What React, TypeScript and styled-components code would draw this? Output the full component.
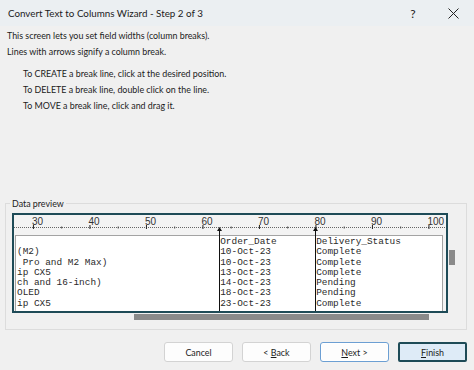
import React from "react";
import styled, { createGlobalStyle, css } from "styled-components";

const Global = createGlobalStyle`
  html, body { margin: 0; padding: 0; background: #f0f0f0; }
  body { font-family: "Segoe UI", Lato, "Noto Sans", sans-serif; }
`;

const CHAR = 5.65;
const FIRST_COL = 27;
const colX = (n: number) => 2 + (n - FIRST_COL) * CHAR;

const Window = styled.div`
  width: 474px;
  height: 370px;
  display: flex;
  flex-direction: column;
  background: #f0f0f0;
  color: #1b1b1b;
  overflow: hidden;
  box-sizing: border-box;
`;

const TitleBar = styled.div`
  height: 26px;
  flex: none;
  display: flex;
  align-items: center;
  background: #ebeff2;
  padding-left: 8px;
`;

const Title = styled.div`
  flex: 1;
  font-size: 9.8px;
`;

const Caption = styled.div<{ $w: number }>`
  width: ${(p) => p.$w}px;
  height: 26px;
  display: flex;
  align-items: center;
  justify-content: center;
  font-size: 12px;
  color: #222;
`;

const Content = styled.div`
  flex: 1;
  display: flex;
  flex-direction: column;
  padding: 2px 0 8px 7px;
`;

const Para = styled.div<{ $indent?: number; $top?: number }>`
  font-size: 8.9px;
  line-height: 16px;
  padding-left: ${(p) => p.$indent ?? 0}px;
  margin-top: ${(p) => p.$top ?? 0}px;
  white-space: nowrap;
`;

const Group = styled.div`
  position: relative;
  margin-top: auto;
  margin-left: -2px;
  width: 462px;
  height: 127px;
  box-sizing: border-box;
  border: 1px solid #dcdcdc;
  padding: 9px 0 0 6px;
`;

const Legend = styled.span`
  position: absolute;
  left: 4px;
  top: -6px;
  padding: 0 2px;
  background: #f0f0f0;
  font-size: 8.9px;
  line-height: 12px;
`;

const PreviewGrid = styled.div`
  display: grid;
  grid-template-columns: 436px 8px;
  grid-template-rows: 100px 8px;
`;

const Frame = styled.div`
  position: relative;
  box-sizing: border-box;
  border: 2px solid #1e4b57;
  background: #f3f3f3;
  display: flex;
  flex-direction: column;
  overflow: hidden;
`;

const Ruler = styled.svg`
  display: block;
  width: 432px;
  height: 20px;
  flex: none;
`;

const DataBox = styled.div`
  flex: 1;
  margin: 0 3px 0 1px;
  background: #ffffff;
  border: 1px solid #a3a3a3;
  border-bottom: none;
  overflow: hidden;
  padding: 1px 0 0 1px;
`;

const Row = styled.pre`
  margin: 0;
  font-family: "Liberation Mono", "Courier New", monospace;
  font-size: 9.42px;
  line-height: 10.3px;
  height: 10.3px;
  color: #2a2a2a;
  white-space: pre;
`;

const Break = styled.div`
  position: absolute;
  top: 12px;
  bottom: 0;
  width: 5px;
  margin-left: -2px;
`;

const VScroll = styled.div`
  padding: 37px 0 0 1px;
`;

const VThumb = styled.div`
  width: 6px;
  height: 15px;
  background: #8a8a8a;
`;

const HScroll = styled.div`
  grid-column: 1 / 2;
  padding: 1px 0 0 122px;
`;

const HThumb = styled.div`
  width: 295px;
  height: 6px;
  background: #8a8a8a;
`;

const ButtonRow = styled.div`
  display: flex;
  justify-content: flex-end;
  gap: 9px;
  margin-top: 12px;
  padding-right: 7px;
`;

const Button = styled.button<{ $variant?: "focus" | "default" }>`
  width: 69px;
  height: 20px;
  box-sizing: border-box;
  padding: 0;
  font-family: inherit;
  font-size: 8.9px;
  color: #1b1b1b;
  background: #fdfdfd;
  border: 1px solid #d3d3d3;
  border-radius: 3px;
  ${(p) =>
    p.$variant === "focus" &&
    css`
      border: 1px solid #6c9fd3;
      box-shadow: inset 0 0 0 1px #ffffff;
    `}
  ${(p) =>
    p.$variant === "default" &&
    css`
      border: 2px solid #1e4b57;
      background: #deebf7;
      border-radius: 2px;
    `}
  u { text-decoration: underline; text-underline-offset: 1px; }
`;

const leftRows = ["", "(M2)", " Pro and M2 Max)", "ip CX5", "ch and 16-inch)", "OLED", "ip CX5"];
const dates = ["Order_Date", "10-Oct-23", "10-Oct-23", "13-Oct-23", "14-Oct-23", "18-Oct-23", "23-Oct-23"];
const status = ["Delivery_Status", "Complete", "Complete", "Complete", "Pending", "Pending", "Complete"];

const pad = (s: string, n: number) => s + " ".repeat(Math.max(0, n - s.length));

const RulerDrawing = () => {
  const ticks: React.ReactNode[] = [];
  for (let n = 27; n <= 103; n++) {
    const x = colX(n) + 0.5;
    if (n % 10 === 0) {
      ticks.push(<line key={"t" + n} x1={x} x2={x} y1={10} y2={14} stroke="#222" strokeWidth={1} />);
      ticks.push(
        <text key={"n" + n} x={x - 1.5} y={10} fontSize={10} fontFamily="Liberation Sans, Arial, sans-serif" fill="#333">
          {n}
        </text>
      );
    } else if (n % 5 === 0) {
      ticks.push(<line key={"t" + n} x1={x} x2={x} y1={11.5} y2={13.5} stroke="#444" strokeWidth={1} />);
    }
  }
  return (
    <Ruler viewBox="0 0 432 20">
      <line x1={0} x2={432} y1={12.5} y2={12.5} stroke="#666" strokeWidth={1} strokeDasharray="1 1" />
      {ticks}
    </Ruler>
  );
};

const BreakMarker = ({ col }: { col: number }) => (
  <Break style={{ left: colX(col) }}>
    <svg width="5" height="84" viewBox="0 0 5 84" style={{ display: "block" }}>
      <polygon points="0,4 5,4 2.5,0" fill="#111" />
      <line x1={2.5} x2={2.5} y1={3} y2={84} stroke="#111" strokeWidth={1} />
    </svg>
  </Break>
);

export default function App() {
  return (
    <>
      <Global />
      <Window>
        <TitleBar>
          <Title>Convert Text to Columns Wizard - Step 2 of 3</Title>
          <Caption $w={40}>?</Caption>
          <Caption $w={41}>
            <svg width="11" height="11" viewBox="0 0 11 11">
              <path d="M0.5 0.5 L10.5 10.5 M10.5 0.5 L0.5 10.5" stroke="#222" strokeWidth="1" />
            </svg>
          </Caption>
        </TitleBar>
        <Content>
          <Para>This screen lets you set field widths (column breaks).</Para>
          <Para>Lines with arrows signify a column break.</Para>
          <Para $indent={16} $top={6}>To CREATE a break line, click at the desired position.</Para>
          <Para $indent={16}>To DELETE a break line, double click on the line.</Para>
          <Para $indent={16}>To MOVE a break line, click and drag it.</Para>
          <Group>
            <Legend>Data preview</Legend>
            <PreviewGrid>
              <Frame>
                <RulerDrawing />
                <DataBox>
                  {leftRows.map((l, i) => (
                    <Row key={i}>{pad(l, 36) + pad(dates[i], 17) + status[i]}</Row>
                  ))}
                </DataBox>
                <BreakMarker col={63} />
                <BreakMarker col={80} />
              </Frame>
              <VScroll>
                <VThumb />
              </VScroll>
              <HScroll>
                <HThumb />
              </HScroll>
            </PreviewGrid>
          </Group>
          <ButtonRow>
            <Button>Cancel</Button>
            <Button>
              &lt; <u>B</u>ack
            </Button>
            <Button $variant="focus">
              <u>N</u>ext &gt;
            </Button>
            <Button $variant="default">
              <u>F</u>inish
            </Button>
          </ButtonRow>
        </Content>
      </Window>
    </>
  );
}
